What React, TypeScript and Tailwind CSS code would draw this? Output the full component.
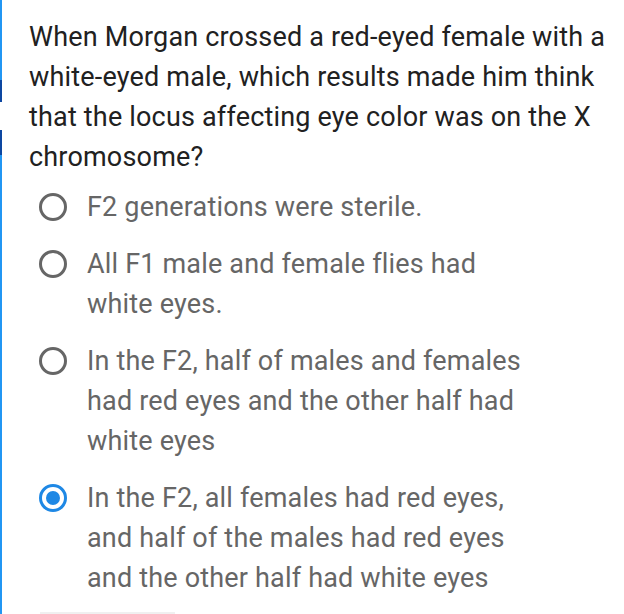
import React, { useState } from 'react';

const options: string[] = [
  'F2 generations were sterile.',
  'All F1 male and female flies had white eyes.',
  'In the F2, half of males and females had red eyes and the other half had white eyes',
  'In the F2, all females had red eyes, and half of the males had red eyes and the other half had white eyes',
];

const Radio = ({ checked }: { checked: boolean }) => (
  <span
    className={`mt-[6px] flex h-[28px] w-[28px] shrink-0 items-center justify-center rounded-full border-[3px] ${
      checked ? 'border-[#1e88e5]' : 'border-[#666666]'
    }`}
  >
    {checked && <span className="h-[14px] w-[14px] rounded-full bg-[#1e88e5]" />}
  </span>
);

const App = () => {
  const [selected, setSelected] = useState<number>(3);

  return (
    <div className="flex h-[614px] w-[624px] overflow-hidden bg-white font-['Roboto','Liberation_Sans',sans-serif]">
      {/* left edge strip */}
      <div className="flex w-[2px] shrink-0 flex-col">
        <div className="h-[80px] bg-[#2196f3]" />
        <div className="h-[22px] bg-[#0d47a1]" />
        <div className="h-[28px] bg-white" />
        <div className="h-[25px] bg-[#0d47a1]" />
        <div className="flex-1 bg-[#2196f3]" />
      </div>

      <div className="flex flex-1 flex-col pl-[27px] pr-[10px] pt-[17px]">
        <p className="text-[27px] leading-[40px] tracking-[0.18px] text-[#212121]">
          When Morgan crossed a red-eyed female with a white-eyed male, which results made him think that the locus
          affecting eye color was on the X chromosome?
        </p>

        <div className="mt-[10px] flex flex-col gap-[17px] pl-[10px]">
          {options.map((opt, i) => (
            <button
              key={i}
              type="button"
              onClick={() => setSelected(i)}
              className="flex items-start gap-[20px] text-left"
            >
              <Radio checked={selected === i} />
              <span className="w-[452px] text-[27px] leading-[40px] tracking-[0.18px] text-[#666666]">{opt}</span>
            </button>
          ))}
        </div>

        <div className="mt-auto ml-[11px] h-[2px] w-[135px] bg-[#f0f0f0]" />
      </div>
    </div>
  );
};

export default App;
